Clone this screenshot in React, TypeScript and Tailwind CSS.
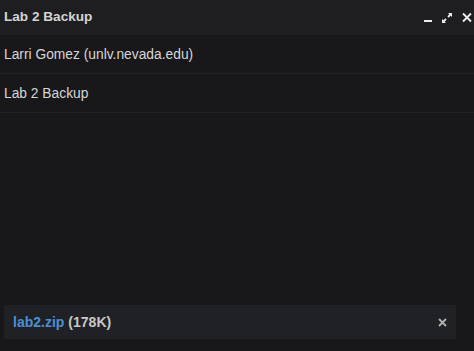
import React from "react";

export default function App() {
  return (
    <div
      className="w-[474px] h-[351px] bg-[#18181a] flex flex-col text-[#d6d6d6] overflow-hidden"
      style={{ fontFamily: '"Liberation Sans", Arial, sans-serif' }}
    >
      <div className="h-[35px] shrink-0 bg-[#1e1e20] flex items-center pl-[4px] pr-[2px]">
        <div className="text-[13.6px] font-bold text-[#d4d4d4] flex-1">Lab 2 Backup</div>
        <div className="flex items-center gap-[9px]">
          <svg width="8" height="12" viewBox="0 0 8 12">
            <rect x="0" y="8" width="8" height="2" fill="#ececec" />
          </svg>
          <svg width="12" height="12" viewBox="0 0 12 12">
            <path d="M7 1h4v4z" fill="#ececec" />
            <path d="M10 2L7 5" stroke="#ececec" strokeWidth="1.8" />
            <path d="M1 7v4h4z" fill="#ececec" />
            <path d="M2 10l3-3" stroke="#ececec" strokeWidth="1.8" />
          </svg>
          <svg width="10" height="11" viewBox="0 0 10 11" fill="none" stroke="#ececec" strokeWidth="1.8">
            <path d="M1 1.5l8 8M9 1.5l-8 8" />
          </svg>
        </div>
      </div>
      <div className="h-[39px] shrink-0 flex items-center pl-[4px] pt-[3px] text-[13.8px] border-b border-[#222225]">
        Larri Gomez (unlv.nevada.edu)
      </div>
      <div className="h-[39px] shrink-0 flex items-center pl-[4px] pt-[3px] text-[13.8px] border-b border-[#222225]">
        Lab 2 Backup
      </div>
      <div className="flex-1" />
      <div className="ml-[4px] mr-[18px] mb-[12px] h-[34px] shrink-0 bg-[#202124] flex items-center pl-[9px] pr-[9px]">
        <span className="text-[14px] font-bold text-[#4b8fd6]">lab2.zip</span>
        <span className="text-[14px] font-bold text-[#c8c8c8] ml-[4px] flex-1">(178K)</span>
        <svg width="9" height="9" viewBox="0 0 9 9" fill="none" stroke="#b0b0b0" strokeWidth="1.8">
          <path d="M1 1l7 7M8 1l-7 7" />
        </svg>
      </div>
    </div>
  );
}
